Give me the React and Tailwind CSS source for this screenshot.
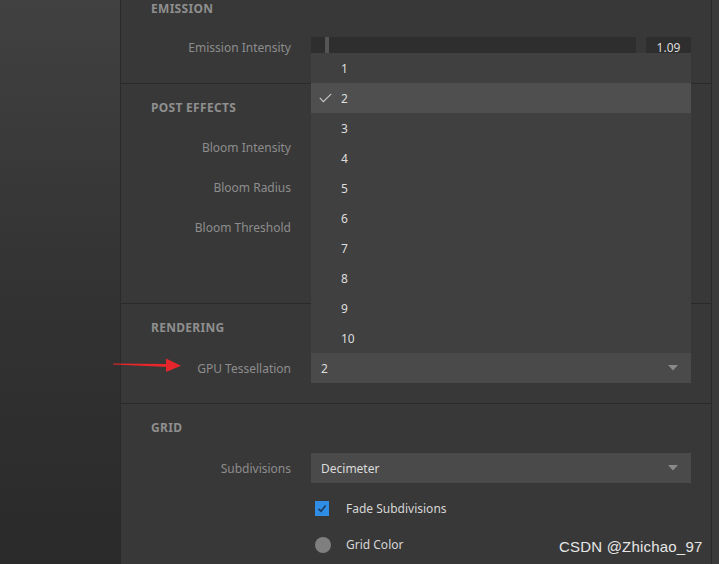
import React from "react";

const font = { fontFamily: '"Noto Sans", "Open Sans", sans-serif' };

function Caret() {
  return (
    <svg width="10" height="6" viewBox="0 0 10 6" className="shrink-0">
      <polygon points="0,0 10,0 5,5.5" fill="#8a8a8a" />
    </svg>
  );
}

function Label({ children }) {
  return (
    <div className="w-[170px] shrink-0 text-right text-[12px] text-[#8d8d8d] pt-[1px]">{children}</div>
  );
}

function Header({ children, className = "" }) {
  return (
    <div className={"pl-[30px] h-[20px] flex items-center text-[12px] font-bold tracking-[0.3px] text-[#8f8f8f] pt-[1px] " + className}>
      {children}
    </div>
  );
}

function Row({ label, children, className = "h-[40px]" }) {
  return (
    <div className={"flex items-center gap-[20px] pr-[20px] " + className}>
      <Label>{label}</Label>
      <div className="flex-1 flex items-center">{children}</div>
    </div>
  );
}

function Select({ value }) {
  return (
    <div className="flex-1 h-[30px] bg-[#4a4a4a] flex items-center justify-between pl-[10px] pr-[13px] text-[12px] text-[#dcdcdc]">
      <span className="pt-[1px]">{value}</span>
      <Caret />
    </div>
  );
}

export default function App() {
  const items = ["1", "2", "3", "4", "5", "6", "7", "8", "9", "10"];
  return (
    <div className="w-[719px] h-[564px] overflow-hidden flex bg-[#3a3a3a] relative" style={font}>
      {/* left sidebar */}
      <div className="w-[121px] shrink-0 h-full bg-gradient-to-b from-[#414141] via-[#333333] to-[#2a2a2a] border-r border-[#2a2a2a]" />
      {/* main panel */}
      <div className="w-[591px] shrink-0 h-full bg-[#383838] border-r border-[#2b2b2b] relative flex flex-col">
        {/* EMISSION */}
        <div className="h-[84px] shrink-0 border-b border-[#2a2a2a] flex flex-col">
          <Header className="h-[16px] -mt-[2px]">EMISSION</Header>
          <Row label="Emission Intensity" className="h-[40px] mt-[9px]">
            <div className="flex-1 h-[20px] bg-[#2e2e2e] pl-[14px]">
              <div className="w-[4px] h-full bg-[#555555]" />
            </div>
            <div className="w-[45px] h-[20px] ml-[10px] bg-[#2e2e2e] flex items-center justify-center text-[12px] text-[#dcdcdc] pt-[2px]">1.09</div>
          </Row>
        </div>
        {/* POST EFFECTS */}
        <div className="h-[220px] shrink-0 border-b border-[#2a2a2a] flex flex-col pt-[13px]">
          <Header>POST EFFECTS</Header>
          <div className="mt-[10px] flex flex-col">
            <Row label="Bloom Intensity" />
            <Row label="Bloom Radius" />
            <Row label="Bloom Threshold" />
          </div>
        </div>
        {/* RENDERING */}
        <div className="h-[100px] shrink-0 border-b border-[#2a2a2a] flex flex-col pt-[13px]">
          <Header>RENDERING</Header>
          <Row label="GPU Tessellation" className="h-[40px] mt-[11px]">
            <Select value="2" />
          </Row>
        </div>
        {/* GRID */}
        <div className="flex-1 flex flex-col pt-[13px]">
          <Header>GRID</Header>
          <Row label="Subdivisions" className="h-[40px] mt-[11px]">
            <Select value="Decimeter" />
          </Row>
          <Row label="" className="h-[40px]">
            <div className="flex items-center gap-[17px] pl-[4px]">
              <div className="w-[14px] h-[15px] bg-[#2f8de6] flex items-center justify-center">
                <svg width="10" height="9" viewBox="0 0 10 9">
                  <path d="M1.5 4.8 L4 7.2 L8.6 1.6" stroke="#1d3b5c" strokeWidth="1.6" fill="none" />
                </svg>
              </div>
              <span className="text-[12px] text-[#d6d6d6] pt-[1px]">Fade Subdivisions</span>
            </div>
          </Row>
          <Row label="" className="h-[33px]">
            <div className="flex items-center gap-[15px] pl-[4px]">
              <div className="w-[16px] h-[16px] rounded-full bg-[#7f7f7f]" />
              <span className="text-[12px] text-[#d6d6d6] pt-[1px]">Grid Color</span>
            </div>
          </Row>
        </div>

        {/* dropdown menu overlay */}
        <div className="absolute left-[190px] top-[53px] w-[380px] bg-[#404040] flex flex-col">
          {items.map((it) => (
            <div
              key={it}
              className={
                "h-[30px] flex items-center relative pl-[30px] pt-[1px] text-[12px] text-[#dedede] " +
                (it === "2" ? "bg-[#4f4f4f]" : "")
              }
            >
              {it === "2" && (
                <svg width="13" height="10" viewBox="0 0 13 10" className="absolute left-[8px] top-[10px]">
                  <path d="M0.8 4.8 L4.4 8.6 L12.2 0.8" stroke="#c8c8c8" strokeWidth="1.1" fill="none" />
                </svg>
              )}
              <span>{it}</span>
            </div>
          ))}
        </div>
      </div>
      <div className="flex-1 h-full bg-[#3b3b3b]" />

      {/* red arrow annotation */}
      <svg width="80" height="20" viewBox="0 0 80 20" className="absolute left-[110px] top-[356px]">
        <polygon points="3,7.6 58,8.0 58,11 3,8.4" fill="#e5262a" />
        <polygon points="56,2.5 71,9.8 56,16" fill="#e5262a" />
      </svg>

      {/* watermark */}
      <div
        className="absolute left-[559px] top-[537px] text-[15px] leading-[20px] text-[#e6e6e6] tracking-[0.2px]"
        style={{ fontFamily: '"Liberation Sans", Arial, sans-serif' }}
      >
        CSDN @Zhichao_97
      </div>
    </div>
  );
}
